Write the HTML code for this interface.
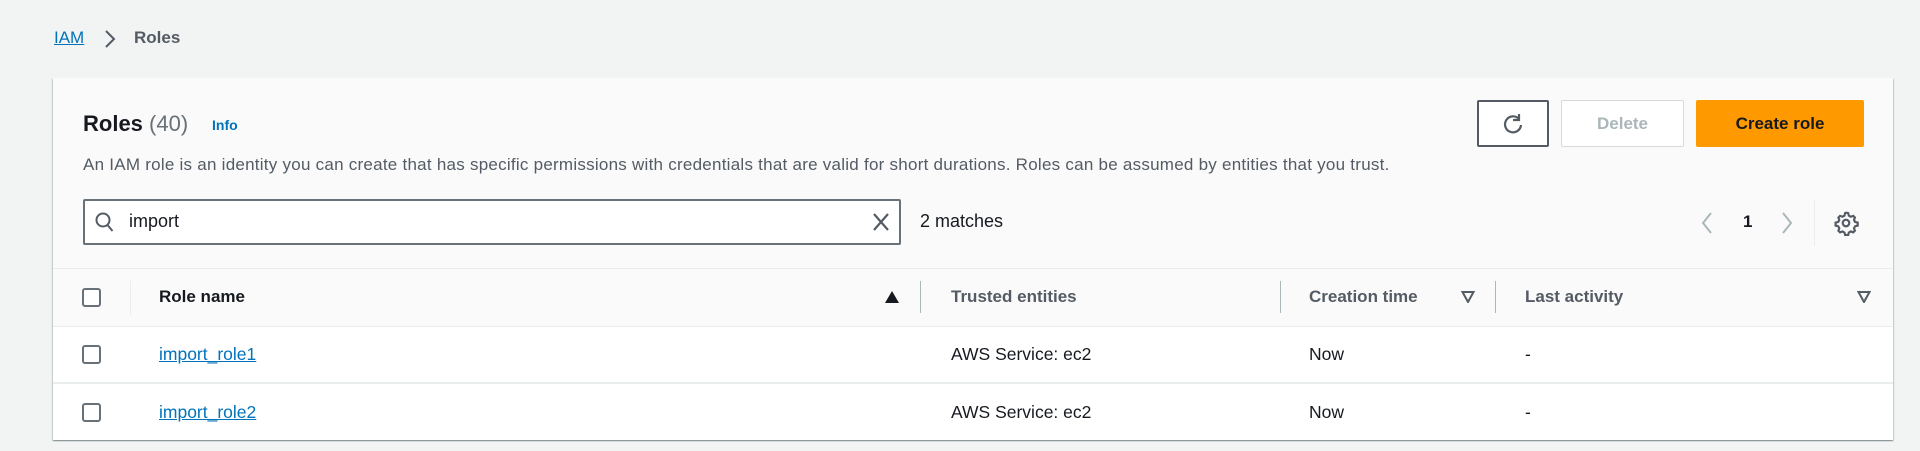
<!DOCTYPE html>
<html><head><meta charset="utf-8"><style>
*{box-sizing:border-box;margin:0;padding:0}
body{width:1920px;height:451px;background:#f2f3f3;font-family:"Liberation Sans",Arial,sans-serif;color:#16191f;position:relative;overflow:hidden}
.a{position:absolute;white-space:nowrap}
.card{position:absolute;left:53px;top:78px;width:1840px;height:362px;background:#fafafa;box-shadow:0 1px 1px rgba(0,28,36,.3),1px 1px 1px rgba(0,28,36,.15),-1px 1px 1px rgba(0,28,36,.15);}
.hdr{position:absolute;left:0;top:190px;width:100%;height:58px;background:#fafafa;border-top:1px solid #eaeded}
.row{position:absolute;left:0;width:100%;background:#fff;border-top:1px solid #eaeded}
.cb{position:absolute;width:19px;height:19px;border:2px solid #687078;border-radius:3px;background:#fff}
.th{font-weight:bold;font-size:17px;color:#16191f}
.td{font-size:17.5px}
.lnk{color:#0073bb;text-decoration:underline;font-size:17.5px}
.div{position:absolute;width:1px;background:#aab7b8}
</style></head><body>
<div class="a" style="left:54px;top:28px;font-size:17px;color:#0073bb;text-decoration:underline">IAM</div>
<svg class="a" style="left:104px;top:29px" width="12" height="20" viewBox="0 0 12 20"><path d="M2 2l8 8-8 8" fill="none" stroke="#545b64" stroke-width="2"/></svg>
<div class="a" style="left:134px;top:28px;font-size:17px;color:#545b64;font-weight:bold">Roles</div>

<div class="card">
  <div class="a" style="left:30px;top:33px;font-size:22px;font-weight:bold">Roles <span style="font-weight:normal;color:#687078">(40)</span></div>
  <div class="a" style="left:159px;top:39px;font-size:14px;font-weight:bold;color:#0073bb">Info</div>
  <div class="a" style="left:30px;top:77px;font-size:17px;color:#545b64;letter-spacing:0.25px">An IAM role is an identity you can create that has specific permissions with credentials that are valid for short durations. Roles can be assumed by entities that you trust.</div>

  <div class="a" style="left:1424px;top:22px;width:72px;height:47px;border:2px solid #545b64;border-radius:2px;background:#fff"></div>
  <svg class="a" style="left:1449px;top:35px" width="22" height="22" viewBox="0 0 22 22"><path d="M17 6A8 8 0 1 0 19 12" fill="none" stroke="#545b64" stroke-width="2.2"/><path d="M17 1v6h-6" fill="none" stroke="#545b64" stroke-width="2.2"/></svg>
  <div class="a" style="left:1508px;top:22px;width:123px;height:47px;border:1px solid #d5dbdb;border-radius:2px;background:#fff;color:#aab7b8;font-weight:bold;font-size:17px;text-align:center;line-height:45px">Delete</div>
  <div class="a" style="left:1643px;top:22px;width:168px;height:47px;background:#ff9900;border-radius:2px;color:#16191f;font-weight:bold;font-size:17px;text-align:center;line-height:47px">Create role</div>

  <div class="a" style="left:30px;top:121px;width:818px;height:46px;border:2px solid #687078;border-radius:2px;background:#fff"></div>
  <svg class="a" style="left:42px;top:134px" width="20" height="22" viewBox="0 0 20 22"><circle cx="8" cy="8" r="6.5" fill="none" stroke="#545b64" stroke-width="2"/><path d="M12.5 13l5 6" stroke="#545b64" stroke-width="2"/></svg>
  <div class="a" style="left:76px;top:133px;font-size:18px">import</div>
  <svg class="a" style="left:818px;top:134px" width="20" height="20" viewBox="0 0 20 20"><path d="M3 2l14 16M17 2L3 18" stroke="#545b64" stroke-width="2.2"/></svg>
  <div class="a" style="left:867px;top:133px;font-size:18px">2 matches</div>

  <svg class="a" style="left:1647px;top:133px" width="14" height="24" viewBox="0 0 14 24"><path d="M11 2L3 12l8 10" fill="none" stroke="#aab7b8" stroke-width="2"/></svg>
  <div class="a" style="left:1690px;top:134px;font-size:17px;font-weight:bold">1</div>
  <svg class="a" style="left:1727px;top:133px" width="14" height="24" viewBox="0 0 14 24"><path d="M3 2l8 10-8 10" fill="none" stroke="#aab7b8" stroke-width="2"/></svg>
  <div class="div" style="left:1761px;top:122px;height:46px;background:#eaeded"></div>
  <svg class="a" style="left:1780px;top:132px" width="26" height="26" viewBox="0 0 24 24"><path d="M12 2.5l2 .3.6 2.4 1.8 1 2.3-.8 1.5 1.5-.8 2.3 1 1.8 2.4.6v2.8l-2.4.6-1 1.8.8 2.3-1.5 1.5-2.3-.8-1.8 1-.6 2.4h-2.8l-.6-2.4-1.8-1-2.3.8-1.5-1.5.8-2.3-1-1.8-2.4-.6v-2.8l2.4-.6 1-1.8-.8-2.3 1.5-1.5 2.3.8 1.8-1 .6-2.4z" fill="none" stroke="#545b64" stroke-width="2"/><circle cx="12" cy="12" r="3" fill="none" stroke="#545b64" stroke-width="2"/></svg>

  <div class="hdr">
    <div class="cb" style="left:29px;top:19px"></div>
    <div class="div" style="left:77px;top:12px;height:34px;background:#eaeded"></div>
    <div class="a th" style="left:106px;top:18px">Role name</div>
    <svg class="a" style="left:832px;top:22px" width="14" height="12"><path d="M7 0L14 12H0z" fill="#16191f"/></svg>
    <div class="div" style="left:867px;top:12px;height:32px"></div>
    <div class="a th" style="left:898px;top:18px;color:#545b64">Trusted entities</div>
    <div class="div" style="left:1227px;top:12px;height:32px"></div>
    <div class="a th" style="left:1256px;top:18px;color:#545b64">Creation time</div>
    <svg class="a" style="left:1408px;top:22px" width="14" height="12"><path d="M1.5 1h11L7 11z" fill="none" stroke="#545b64" stroke-width="2"/></svg>
    <div class="div" style="left:1442px;top:12px;height:32px"></div>
    <div class="a th" style="left:1472px;top:18px;color:#545b64">Last activity</div>
    <svg class="a" style="left:1804px;top:22px" width="14" height="12"><path d="M1.5 1h11L7 11z" fill="none" stroke="#545b64" stroke-width="2"/></svg>
  </div>
  <div class="row" style="top:248px;height:56px">
    <div class="cb" style="left:29px;top:18px"></div>
    <div class="a lnk" style="left:106px;top:17px">import_role1</div>
    <div class="a td" style="left:898px;top:17px">AWS Service: ec2</div>
    <div class="a td" style="left:1256px;top:17px">Now</div>
    <div class="a td" style="left:1472px;top:17px">-</div>
  </div>
  <div class="row" style="top:304px;height:58px;border-top:2px solid #eaeded">
    <div class="cb" style="left:29px;top:19px"></div>
    <div class="a lnk" style="left:106px;top:18px">import_role2</div>
    <div class="a td" style="left:898px;top:18px">AWS Service: ec2</div>
    <div class="a td" style="left:1256px;top:18px">Now</div>
    <div class="a td" style="left:1472px;top:18px">-</div>
  </div>
</div>
</body></html>
